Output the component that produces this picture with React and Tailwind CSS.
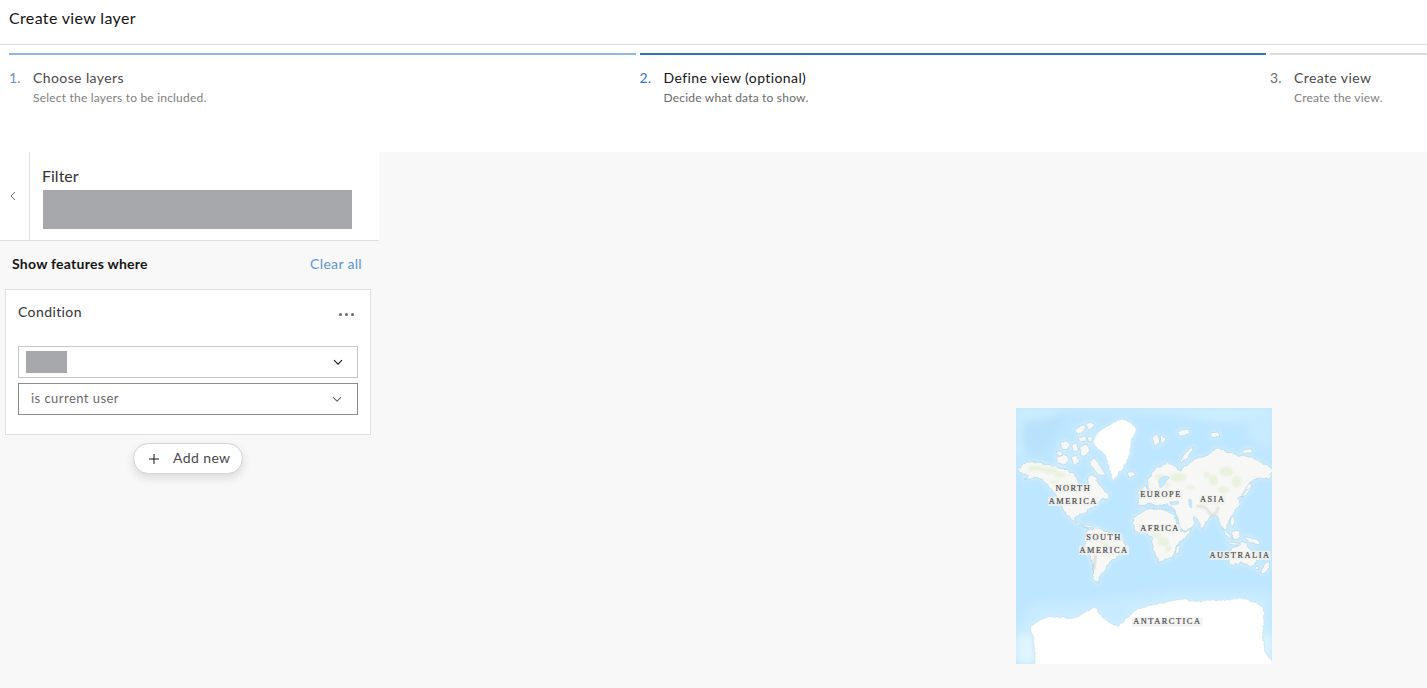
import React from "react";

const font = { fontFamily: '"Lato", "Noto Sans", sans-serif' };

function Step({ n, title, desc, bar, numClass, titleClass, descClass }) {
  return (
    <div className="w-[626.5px] shrink-0">
      <div className={`h-[2px] ${bar}`} />
      <div className="flex pt-[13px]">
        <span className={`w-[24px] text-[14px] leading-[20px] ${numClass}`}>{n}.</span>
        <div>
          <div className={`text-[14px] leading-[20px] tracking-[0.4px] ${titleClass}`}>{title}</div>
          <div className={`text-[12px] leading-[16px] mt-[2px] tracking-[0.2px] ${descClass}`}>{desc}</div>
        </div>
      </div>
    </div>
  );
}

function Chevron({ color = "#151515" }) {
  return (
    <svg width="12" height="12" viewBox="0 0 12 12" fill="none" stroke={color} strokeWidth="1.1">
      <path d="M2 4.2 L6 8.2 L10 4.2" />
    </svg>
  );
}

/* Coast generator: lightly smooth an outline, then add small deterministic wiggle */
function noise(i, s) {
  const v = Math.sin(i * 12.9898 + s * 78.233) * 43758.5453;
  return v - Math.floor(v) - 0.5;
}
function coast(pts, seed, amp = 7) {
  const cur = [];
  pts.forEach((p, i) => {
    const q = pts[(i + 1) % pts.length];
    cur.push([p[0] * 0.85 + q[0] * 0.15, p[1] * 0.85 + q[1] * 0.15]);
    cur.push([p[0] * 0.15 + q[0] * 0.85, p[1] * 0.15 + q[1] * 0.85]);
  });
  const out = [];
  cur.forEach((p, i) => {
    const q = cur[(i + 1) % cur.length];
    const len = Math.hypot(q[0] - p[0], q[1] - p[1]);
    const steps = Math.max(1, Math.round(len / 5));
    for (let k = 0; k < steps; k++) {
      const t = k / steps;
      const id = i * 7 + k;
      out.push([
        p[0] + (q[0] - p[0]) * t + noise(id, seed) * amp,
        p[1] + (q[1] - p[1]) * t + noise(id, seed + 3) * amp,
      ]);
    }
  });
  return "M" + out.map((p) => p[0].toFixed(1) + " " + p[1].toFixed(1)).join(" L") + " Z";
}

const continents = [
  // North America
  [[20,208],[50,188],[75,185],[105,192],[135,200],[165,205],[190,222],[200,232],[208,252],[226,258],[236,250],[236,228],[252,222],[272,258],[298,288],[284,298],[268,300],[258,320],[240,324],[228,338],[212,342],[196,348],[192,364],[212,374],[236,388],[222,384],[204,374],[176,352],[154,320],[138,288],[120,262],[102,245],[80,234],[58,234],[40,244],[54,226],[34,220]],
  // South America
  [[230,398],[250,384],[272,384],[294,396],[318,410],[347,432],[342,452],[322,470],[298,486],[286,512],[270,532],[264,550],[250,540],[248,505],[245,480],[228,440],[224,415]],
  // Eurasia
  [[383,318],[388,295],[412,285],[420,268],[412,245],[432,208],[470,188],[498,195],[510,212],[530,195],[555,175],[590,165],[625,140],[650,155],[690,168],[730,172],[788,208],[778,238],[745,232],[720,250],[728,260],[705,272],[700,292],[685,290],[692,312],[674,332],[666,358],[650,372],[644,394],[630,376],[625,350],[605,345],[590,365],[578,390],[565,360],[552,345],[555,375],[520,398],[505,365],[500,340],[490,322],[465,312],[440,322],[425,308],[405,314]],
  // Africa
  [[366,374],[376,348],[405,330],[445,326],[470,334],[492,342],[505,380],[516,394],[546,386],[526,412],[506,430],[496,450],[490,470],[470,476],[445,490],[432,452],[425,412],[405,396],[380,396]],
  // Australia
  [[658,454],[680,436],[698,424],[712,430],[722,450],[747,470],[740,490],[718,500],[712,492],[690,488],[665,498],[653,480]],
];

const islands = [
  [[140,172],[165,162],[178,178],[165,195],[142,190]],
  [[182,170],[200,165],[210,188],[190,195]],
  [[150,128],[172,122],[182,135],[170,150],[155,146]],
  [[186,135],[200,128],[206,150],[190,156]],
  [[210,140],[228,132],[240,150],[226,170],[212,165]],
  [[138,152],[155,155],[160,166],[143,168]],
  [[195,88],[218,74],[228,82],[214,100],[200,104]],
  [[226,70],[250,68],[254,78],[236,92]],
  [[205,112],[225,108],[232,122],[210,126]],
  [[234,108],[248,110],[246,126],[234,124]],
  [[238,190],[252,172],[272,198],[288,226],[266,226]],
  [[350,218],[368,214],[376,225],[358,233]],
  [[394,264],[408,254],[414,280],[398,286]],
  [[382,274],[392,272],[392,284],[382,284]],
  [[426,112],[442,102],[450,125],[434,142]],
  [[450,104],[470,116],[456,134]],
  [[500,95],[535,85],[540,100],[510,110]],
  [[508,190],[524,160],[550,138],[548,150],[532,176]],
  [[600,100],[625,95],[630,110],[605,112]],
  [[696,150],[725,145],[728,158],[700,160]],
  [[498,444],[510,432],[508,455],[498,464]],
  [[706,268],[722,244],[727,262],[706,286],[690,294]],
  [[636,382],[650,396],[674,422],[650,410]],
  [[664,394],[690,390],[688,416],[670,420]],
  [[655,426],[690,430],[690,437],[660,433]],
  [[700,408],[746,420],[752,436],[716,426]],
  [[664,346],[674,358],[670,382],[660,370]],
  [[762,494],[776,484],[780,500],[762,522],[750,518]],
  [[222,372],[248,378],[246,384],[226,380]],
  [[738,500],[745,500],[745,510],[738,510]],
];

const ice = [
  // Greenland
  [[248,130],[262,100],[290,78],[330,56],[365,70],[380,92],[364,120],[360,160],[347,195],[322,225],[308,244],[298,205],[285,165],[262,145]],
  // Antarctica
  [[62,682],[95,655],[130,650],[180,655],[205,650],[255,618],[275,650],[320,682],[345,660],[375,630],[440,612],[510,596],[560,605],[600,600],[650,600],[690,594],[730,604],[764,625],[758,700],[765,760],[790,785],[795,830],[78,830],[72,745],[70,710]],
];

const seas = [
  [[400,322],[440,326],[480,330],[498,336],[470,318],[440,316],[415,314]],
  [[478,306],[505,304],[506,312],[482,314]],
  [[536,298],[544,298],[546,324],[538,322]],
  [[498,345],[506,372],[516,394],[510,392],[498,360]],
  [[446,240],[462,228],[480,232],[470,240],[456,262],[448,262]],
  [[204,240],[228,252],[226,270],[208,262]],
];

const greens = [
  [78,205,26,8],[120,212,24,9],[150,225,18,9],[175,255,20,7],[135,245,14,6],
  [450,232,14,9],[505,232,24,13],[470,255,14,5],[540,262,16,5],
  [610,240,14,16],[650,215,22,14],[680,245,14,18],[640,270,18,10],[590,225,8,10],
  [440,405,16,8],[460,425,18,14],[475,445,10,8],
  [260,405,14,6],[285,430,12,8],[262,385,10,4],
];

const labels = [
  ["NORTH", 190, 273, 112],
  ["AMERICA", 190, 311, 152],
  ["EUROPE", 453, 290, 130],
  ["ASIA", 608, 307, 80],
  ["AFRICA", 450, 393, 124],
  ["SOUTH", 282, 420, 110],
  ["AMERICA", 282, 458, 150],
  ["AUSTRALIA", 690, 473, 184],
  ["ANTARCTICA", 472, 673, 212],
];

function WorldMap() {
  const lands = continents.map((c, i) => coast(c, i + 1)).concat(islands.map((c, i) => coast(c, i + 20, 3)));
  const ices = ice.map((c, i) => coast(c, i + 60, 5));
  const all = lands.concat(ices).join(" ");
  return (
    <svg width="256" height="256" viewBox="18 24 768 768" className="block">
      <defs>
        <filter id="b1" x="-20%" y="-20%" width="140%" height="140%"><feGaussianBlur stdDeviation="13" /></filter>
        <filter id="b2" x="-20%" y="-20%" width="140%" height="140%"><feGaussianBlur stdDeviation="6" /></filter>
        <filter id="b3" x="-20%" y="-20%" width="140%" height="140%"><feGaussianBlur stdDeviation="3.5" /></filter>
        <clipPath id="c"><rect x="18" y="24" width="768" height="768" /></clipPath>
      </defs>
      <g clipPath="url(#c)">
        <rect x="18" y="24" width="768" height="768" fill="#bde6ff" />
        <path d="M18 24 H786 V50 L640 70 L500 45 L380 40 L150 35 L60 130 L18 190 Z" fill="#cdeeff" filter="url(#b1)" />
        <path d="M40 60 L170 50 L120 130 L70 170 L35 130 Z" fill="#b9e1fb" filter="url(#b1)" />
        <path d="M700 60 L786 50 V150 L730 130 Z" fill="#c9ebff" filter="url(#b1)" />
        <path d="M18 680 L60 610 L250 600 L500 570 L786 570 V700 H18 Z" fill="#c8ebff" filter="url(#b1)" />
        <path d="M18 700 H786 V792 H18 Z" fill="#e0f6ff" filter="url(#b1)" />
        <path d={all} fill="#d3eefc" stroke="#d3eefc" strokeWidth="12" strokeLinejoin="round" filter="url(#b2)" opacity="0.85" />
        <path d={lands.join(" ")} fill="#f7f7f5" stroke="#b3d9ec" strokeWidth="2.4" strokeLinejoin="round" />
        <path d={ices.join(" ")} fill="#ffffff" stroke="#bcdff0" strokeWidth="2" strokeLinejoin="round" />
        <g filter="url(#b3)">
          {greens.map(([x, y, a, b], i) => (<ellipse key={i} cx={x} cy={y} rx={a} ry={b} fill="#e8f2df" />))}
        </g>
        {seas.map((s, i) => (
          <path key={i} d={coast(s, i + 90, 2)} fill="#c6e9fd" stroke="#b3d9ec" strokeWidth="1.6" />
        ))}
        <path d="M560 318 Q590 315 600 342 Q620 350 625 320" fill="none" stroke="#9f9893" strokeWidth="3" opacity="0.7" filter="url(#b3)" />
        <path d="M258 465 L250 510" fill="none" stroke="#9f9893" strokeWidth="4" opacity="0.6" filter="url(#b3)" />
        {labels.map(([t, x, y, w], i) => (
          <g key={i}>
            <rect x={x - w / 2} y={y - 21} width={w} height="28" fill="#f0f0ed" opacity="0.8" />
            <text x={x} y={y} textAnchor="middle" fontSize="25" letterSpacing="4.6" fill="#454545" stroke="#454545" strokeWidth="0.5" style={{ fontFamily: '"Liberation Serif", serif' }}>{t}</text>
          </g>
        ))}
      </g>
    </svg>
  );
}

export default function App() {
  return (
    <div className="w-[1427px] h-[688px] overflow-hidden bg-white flex flex-col" style={font}>
      <div className="h-[45px] shrink-0 border-b border-[#dfdfdf] pl-[9px] pt-[7px] text-[16px] leading-[22px] tracking-[0.35px] text-[#151515]">
        Create view layer
      </div>
      <div className="h-[107px] shrink-0 pl-[9px] pt-[8px] flex gap-[4px] overflow-hidden">
        <Step n="1" title="Choose layers" desc="Select the layers to be included." bar="bg-[#94b8e0]" numClass="text-[#6a8fb5]" titleClass="text-[#4a4a4a]" descClass="text-[#808080]" />
        <Step n="2" title="Define view (optional)" desc="Decide what data to show." bar="bg-[#2f77bc]" numClass="text-[#2f77bc]" titleClass="text-[#151515]" descClass="text-[#6a6a6a]" />
        <Step n="3" title="Create view" desc="Create the view." bar="bg-[#dcdcdc]" numClass="text-[#6a6a6a]" titleClass="text-[#4a4a4a]" descClass="text-[#808080]" />
      </div>
      <div className="flex-1 flex bg-[#f8f8f8]">
        <div className="w-[379px] shrink-0 flex flex-col">
          <div className="h-[89px] bg-white border-b border-[#dfdfdf] flex">
            <div className="w-[30px] border-r border-[#dfdfdf] flex items-center justify-center pr-[4px] pb-[1px]">
              <svg width="10" height="12" viewBox="0 0 10 12" fill="none" stroke="#6a6a6a" strokeWidth="1"><path d="M7 2 L3 6 L7 10" /></svg>
            </div>
            <div className="pl-[12px] pt-[13px]">
              <div className="text-[16px] leading-[22px] text-[#323232] h-[25px]">Filter</div>
              <div className="w-[309px] h-[39px] ml-[1px] bg-[#a7a8ab]" />
            </div>
          </div>
          <div className="flex items-center justify-between pl-[12px] pr-[17px] h-[48px]">
            <span className="text-[14px] font-bold tracking-[0.25px] mb-[3px] text-[#151515]">Show features where</span>
            <span className="text-[14px] tracking-[0.33px] mb-[3px] text-[#5a97d6]">Clear all</span>
          </div>
          <div className="ml-[5px] w-[366px] h-[146px] bg-white border border-[#dfdfdf] px-[12px] pt-[10px]">
            <div className="flex justify-between items-center h-[22px]">
              <span className="text-[14px] tracking-[0.4px] text-[#323232]">Condition</span>
              <span className="flex gap-[3px] mr-[4px] mt-[7px]">
                <i className="block w-[3px] h-[3px] rounded-full bg-[#6a6a6a]" />
                <i className="block w-[3px] h-[3px] rounded-full bg-[#6a6a6a]" />
                <i className="block w-[3px] h-[3px] rounded-full bg-[#6a6a6a]" />
              </span>
            </div>
            <div className="mt-[24px] h-[32px] border border-[#c6c6c6] flex items-center justify-between pl-[7px] pr-[13px]">
              <div className="w-[41px] h-[22px] bg-[#a7a8ab]" />
              <Chevron />
            </div>
            <div className="mt-[5px] h-[32px] border border-[#8c8c8c] flex items-center justify-between pl-[12px] pr-[14px]">
              <span className="text-[13px] tracking-[0.45px] text-[#6a6a6a]">is current user</span>
              <Chevron color="#6a6a6a" />
            </div>
          </div>
          <div className="flex justify-center pr-[3px] mt-[8px]">
            <div className="w-[110px] h-[31px] rounded-full bg-white border border-[#d4d4d4] shadow-[0_4px_10px_rgba(0,0,0,0.12)] flex items-center pl-[14px]">
              <svg width="12" height="12" viewBox="0 0 12 12" stroke="#151515" strokeWidth="1"><path d="M6 1 V11 M1 6 H11" /></svg>
              <span className="ml-[13px] mb-[2px] text-[14px] tracking-[0.4px] text-[#4a4a4a]">Add new</span>
            </div>
          </div>
        </div>
        <div className="flex-1 pl-[637px] pt-[256px]">
          <WorldMap />
        </div>
      </div>
    </div>
  );
}
